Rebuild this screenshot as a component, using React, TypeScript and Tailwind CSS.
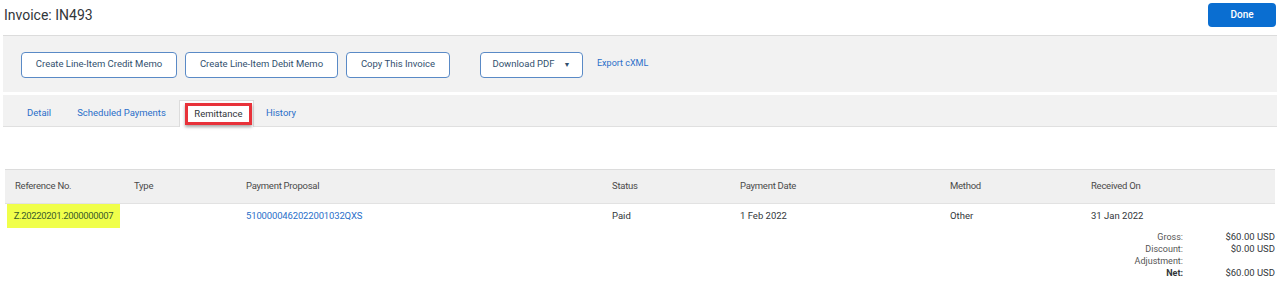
import React from 'react';

const font = { fontFamily: 'Roboto, "Liberation Sans", Arial, sans-serif' };

const ActionButton: React.FC<{ label: string; width: string; caret?: boolean }> = ({ label, width, caret }) => (
  <button
    className={`${width} h-[26px] flex items-center justify-center gap-[9px] whitespace-nowrap bg-white border border-[#5a8ac6] rounded-[4px] text-[9.5px] text-[#32506e]`}
  >
    <span>{label}</span>
    {caret && <span className="text-[7px] text-[#32506e] mt-[2px]">▼</span>}
  </button>
);

const columns = [
  { label: 'Reference No.', w: 'w-[119px]' },
  { label: 'Type', w: 'w-[112px]' },
  { label: 'Payment Proposal', w: 'w-[366px]' },
  { label: 'Status', w: 'w-[128px]' },
  { label: 'Payment Date', w: 'w-[210px]' },
  { label: 'Method', w: 'w-[141px]' },
  { label: 'Received On', w: 'flex-1' },
];

const summary = [
  { label: 'Gross:', value: '$60.00 USD' },
  { label: 'Discount:', value: '$0.00 USD' },
  { label: 'Adjustment:', value: '' },
  { label: 'Net:', value: '$60.00 USD', bold: true },
];

export default function App() {
  return (
    <div className="w-[1280px] h-[285px] bg-white overflow-hidden whitespace-nowrap" style={font}>
      {/* header */}
      <div className="flex items-center justify-between h-[33px] pl-[4px] pr-[4px]">
        <h1 className="text-[14px] text-[#32363a] -mt-[3px]">Invoice: IN493</h1>
        <button className="w-[68px] h-[24px] -mt-[4px] bg-[#0a6ed1] rounded-[4px] text-white text-[10px] font-medium">
          Done
        </button>
      </div>

      {/* toolbar */}
      <div className="mx-[3px] mt-[2px] h-[57px] bg-[#f2f2f2] border-t border-[#dcdcdc] flex items-center pl-[18px] pt-[1px]">
        <div className="flex items-center gap-[8px]">
          <ActionButton label="Create Line-Item Credit Memo" width="w-[156px]" />
          <ActionButton label="Create Line-Item Debit Memo" width="w-[153px]" />
          <ActionButton label="Copy This Invoice" width="w-[104px]" />
        </div>
        <div className="ml-[30px]">
          <ActionButton label="Download PDF" width="w-[103px]" caret />
        </div>
        <a className="ml-[14px] -mt-[2px] text-[9px] text-[#2a6fc9]">Export cXML</a>
      </div>

      {/* tabs */}
      <div className="mx-[3px] mt-[3px] h-[32px] bg-[#f2f2f2] border-b border-[#e0e0e0] flex items-end pl-[24px] text-[9.5px]">
        <span className="h-[26px] flex items-center text-[#2a6fc9] mr-[26px]">Detail</span>
        <span className="h-[26px] flex items-center text-[#2a6fc9] mr-[13px]">Scheduled Payments</span>
        <span className="h-[27px] -mb-px w-[75px] bg-white border-t border-x border-[#dcdcdc] flex items-center pl-[5px]">
          <span className="h-[22px] w-[67px] border-[3px] border-[#e8323a] shadow-[0_2px_3px_rgba(0,0,0,0.35)] flex items-center justify-center text-[#32363a]">
            Remittance
          </span>
        </span>
        <span className="h-[26px] flex items-center text-[#2a6fc9] ml-[12px]">History</span>
      </div>

      {/* table */}
      <div className="mx-[5px] mt-[42px]">
        <div className="h-[35px] bg-[#f0f0f0] border-t border-[#dcdcdc] border-b border-b-[#e2e2e2] flex items-center pl-[10px] text-[9.5px] tracking-[-0.25px] text-[#4a4a4a]">
          {columns.map((c) => (
            <div key={c.label} className={c.w}>{c.label}</div>
          ))}
        </div>
        <div className="flex items-start text-[9.5px] text-[#32363a]">
          <div className="w-[129px] flex">
            <div className="ml-[2px] w-[113px] h-[24px] bg-[#f0ff4a] flex items-center justify-center tracking-[-0.35px] text-[#3a5a2a]">
              Z.20220201.2000000007
            </div>
          </div>
          <div className="w-[112px]" />
          <div className="w-[366px] h-[24px] flex items-center tracking-[-0.15px] text-[#2a6fc9]">5100000462022001032QXS</div>
          <div className="w-[128px] h-[24px] flex items-center">Paid</div>
          <div className="w-[210px] h-[24px] flex items-center">1 Feb 2022</div>
          <div className="w-[141px] h-[24px] flex items-center">Other</div>
          <div className="flex-1 h-[24px] flex items-center">31 Jan 2022</div>
        </div>
        <div className="flex justify-end mt-[3px] text-[9px] leading-[12px] text-[#32363a]">
          <div className="flex flex-col items-end text-[#555]">
            {summary.map((s) => (
              <div key={s.label} className={s.bold ? 'h-[12px] font-bold text-[#32363a]' : 'h-[12px]'}>{s.label}</div>
            ))}
          </div>
          <div className="w-[92px] flex flex-col items-end text-[9.5px]">
            {summary.map((s) => (
              <div key={s.label} className="h-[12px]">{s.value}</div>
            ))}
          </div>
        </div>
      </div>
    </div>
  );
}
